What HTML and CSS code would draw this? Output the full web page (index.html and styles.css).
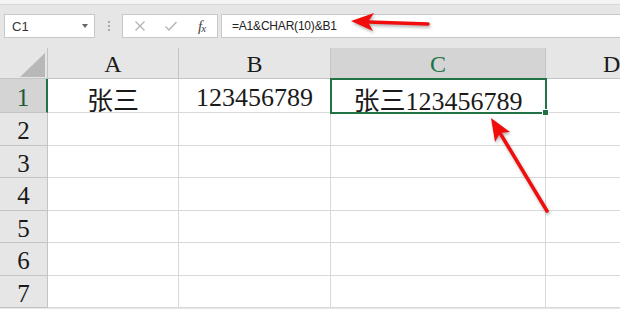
FILE: index.html
```html
<!DOCTYPE html>
<html lang="zh-CN">
<head>
  <meta charset="UTF-8">
  <title>CHAR(10)</title>
  <link rel="stylesheet" href="styles.css">
</head>
<body>
  <div class="app">
    <div class="ribbon-edge"></div>

    <div class="formula-row">
      <div class="name-box">
        <span>C1</span>
        <span class="caret"></span>
      </div>
      <div class="grip"><i></i><i></i><i></i></div>
      <div class="fx-buttons">
        <svg width="12" height="12" viewBox="0 0 12 12"><path d="M1.5 1.5 L10.5 10.5 M10.5 1.5 L1.5 10.5" stroke="#b4b4b4" stroke-width="1.3" fill="none"/></svg>
        <svg width="14" height="12" viewBox="0 0 14 12"><path d="M1.5 6.5 L5 10 L12.5 2" stroke="#b4b4b4" stroke-width="1.4" fill="none"/></svg>
        <span class="fx">f<sub>x</sub></span>
      </div>
      <div class="formula-input">=A1&amp;CHAR(10)&amp;B1</div>
    </div>

    <div class="sheet">
      <div class="hd corner"><span class="tri"></span></div>
      <div class="hd">A</div>
      <div class="hd">B</div>
      <div class="hd active-col">C</div>
      <div class="hd hd-d">D</div>

      <div class="hd rn active-row">1</div>
      <div class="cell">张三</div>
      <div class="cell">123456789</div>
      <div class="cell active">张三123456789</div>
      <div class="cell"></div>

      <div class="hd rn">2</div>
      <div class="cell"></div><div class="cell"></div><div class="cell"></div><div class="cell"></div>
      <div class="hd rn">3</div>
      <div class="cell"></div><div class="cell"></div><div class="cell"></div><div class="cell"></div>
      <div class="hd rn">4</div>
      <div class="cell"></div><div class="cell"></div><div class="cell"></div><div class="cell"></div>
      <div class="hd rn">5</div>
      <div class="cell"></div><div class="cell"></div><div class="cell"></div><div class="cell"></div>
      <div class="hd rn">6</div>
      <div class="cell"></div><div class="cell"></div><div class="cell"></div><div class="cell"></div>
      <div class="hd rn">7</div>
      <div class="cell"></div><div class="cell"></div><div class="cell"></div><div class="cell"></div>
    </div>

    <!-- red annotation arrows -->
    <svg class="marks" width="620" height="309" viewBox="0 0 620 309">
      <g fill="#f20d0d" stroke="#f20d0d">
        <line x1="428" y1="24" x2="368" y2="22" stroke-width="3.5" stroke-linecap="round"/>
        <polygon points="351,21 374,13 368,22 373,31" stroke="none"/>
        <line x1="547" y1="211" x2="500" y2="133" stroke-width="3.5" stroke-linecap="round"/>
        <polygon points="491,118 510,132 500,133 495,142" stroke="none"/>
      </g>
    </svg>
  </div>
</body>
</html>
```

FILE: styles.css
```css
body {
  margin: 0;
  font-family: "Liberation Sans", Arial, sans-serif;
  background-color: #e6e6e6;
}
.app {
  position: relative;
  width: 620px;
  height: 309px;
  overflow: hidden;
}
.ribbon-edge {
  height: 4px;
  background: #f3f3f3;
  border-bottom: 1px solid #d6d6d6;
}
.formula-row {
  display: flex;
  align-items: center;
  height: 24px;
  padding: 9px 0 0 4px;
  margin-bottom: 10px;
}
.name-box {
  width: 91px;
  height: 24px;
  box-sizing: border-box;
  border: 1px solid #c8c8c8;
  background: #fff;
  display: flex;
  align-items: center;
  justify-content: space-between;
  padding: 0 6px 0 7px;
  font-size: 13px;
  color: #333;
}
.caret {
  border-left: 3px solid transparent;
  border-right: 3px solid transparent;
  border-top: 4px solid #666;
}
.grip {
  width: 27px;
  display: flex;
  flex-direction: column;
  align-items: center;
  gap: 2px;
}
.grip i {
  width: 2px;
  height: 2px;
  background: #a8a8a8;
}
.fx-buttons {
  width: 96px;
  height: 24px;
  box-sizing: border-box;
  border: 1px solid #c8c8c8;
  background: #fff;
  display: grid;
  grid-template-columns: repeat(3, 31px);
  justify-items: center;
  align-items: center;
  padding-left: 1px;
  margin-right: 3px;
}
.fx {
  font-family: "Liberation Serif", serif;
  font-style: italic;
  font-size: 15px;
  color: #444;
  line-height: 1;
  letter-spacing: -1px;
}
.fx sub {
  font-size: 11px;
  vertical-align: -1px;
}
.formula-input {
  flex: 1;
  height: 24px;
  box-sizing: border-box;
  border: 1px solid #c8c8c8;
  border-right: none;
  background: #fff;
  padding-left: 10px;
  font-size: 12px;
  line-height: 22px;
  letter-spacing: -0.2px;
  color: #222;
}

/* worksheet */
.sheet {
  display: grid;
  grid-template-columns: 48px 131px 152px 215px 1fr;
  grid-template-rows: 31px 34px 33px 32px 33px 32px 33px 32px;
  background: #fff;
}
.cell,
.hd {
  box-sizing: border-box;
  border-right: 1px solid #d9d9d9;
  border-bottom: 1px solid #d9d9d9;
  display: flex;
  align-items: center;
  justify-content: center;
  padding-top: 3px;
  font-family: "Liberation Serif", "Noto Sans CJK SC", serif;
  color: #1a1a1a;
}
.cell {
  font-size: 26px;
  padding-top: 5px;
}
.hd {
  background: #e6e6e6;
  border-right-color: #c4c4c4;
  border-bottom-color: #c4c4c4;
  font-size: 24px;
}
.hd-d {
  justify-content: flex-start;
  padding-left: 57px;
}
.rn {
  font-size: 25px;
  padding-top: 4px;
}
.corner {
  align-items: flex-end;
  justify-content: flex-end;
  padding: 0 2px 1px 0;
}
.tri {
  width: 0;
  height: 0;
  border-left: 25px solid transparent;
  border-bottom: 24px solid #b8b8b8;
}
.active-col {
  background: #d4d4d4;
  color: #217346;
  border-bottom-color: #217346;
}
.active-row {
  background: #d4d4d4;
  color: #1d5a3a;
  border-right: 2px solid #217346;
}
.active {
  position: relative;
  outline: 2px solid #217346;
  outline-offset: -1px;
  z-index: 1;
}
.active::after {
  content: "";
  position: absolute;
  right: -4px;
  bottom: -4px;
  width: 5px;
  height: 5px;
  background: #217346;
  border: 1px solid #fff;
}
.marks {
  position: absolute;
  top: 0;
  left: 0;
  pointer-events: none;
  filter: drop-shadow(1px 2px 1.5px rgba(0,0,0,0.3));
}
```
